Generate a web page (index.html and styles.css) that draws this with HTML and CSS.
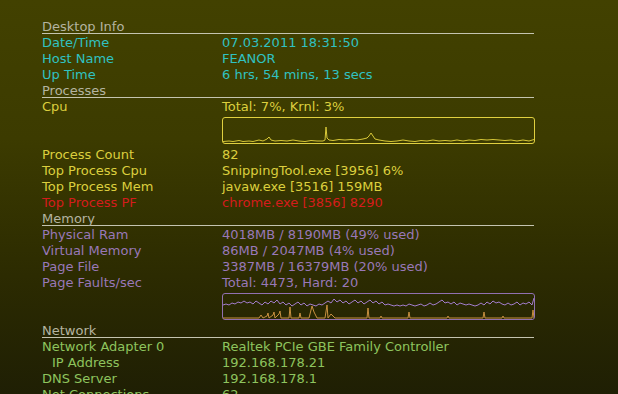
FILE: index.html
```html
<!DOCTYPE html>
<html>
<head>
<meta charset="utf-8">
<link rel="stylesheet" href="styles.css">
</head>
<body>
<div class="panel">
  <div class="head">Desktop Info</div>
  <div class="row cyan"><span class="k">Date/Time</span><span class="v">07.03.2011 18:31:50</span></div>
  <div class="row cyan"><span class="k">Host Name</span><span class="v">FEANOR</span></div>
  <div class="row cyan"><span class="k">Up Time</span><span class="v">6 hrs, 54 mins, 13 secs</span></div>

  <div class="head">Processes</div>
  <div class="row yellow"><span class="k">Cpu</span><span class="v">Total: 7%, Krnl: 3%</span></div>
  <div class="graphrow">
    <div class="graph cpu">
      <svg viewBox="0 0 311 25" preserveAspectRatio="none">
        <polyline fill="none" stroke="#d8c838" stroke-width="1" points="0,23.5 6,23 10,23.5 16,22.5 20,23.5 26,23 30,23.5 36,22 40,23 44,21 46,19 48,22 52,23 58,22.5 64,23 70,22 76,23 82,23.5 88,22.5 94,23 100,23 102,22 103,9 104,20 106,22 110,22.5 116,21.5 122,22 128,21.5 134,22 140,21 144,20 146,18 148,15 150,18 152,21 156,22 162,23 168,23.5 174,23 180,22 186,23 192,23.5 198,22.5 204,23 210,22 216,23 222,22.5 228,23 234,22 240,23 246,22 252,22.5 258,21.5 264,22 270,21.5 276,22 282,22.5 288,22 294,23 300,22 306,23 311,21.5"/>
      </svg>
    </div>
  </div>
  <div class="row yellow"><span class="k">Process Count</span><span class="v">82</span></div>
  <div class="row yellow"><span class="k">Top Process Cpu</span><span class="v">SnippingTool.exe [3956] 6%</span></div>
  <div class="row yellow"><span class="k">Top Process Mem</span><span class="v">javaw.exe [3516] 159MB</span></div>
  <div class="row red"><span class="k">Top Process PF</span><span class="v">chrome.exe [3856] 8290</span></div>

  <div class="head">Memory</div>
  <div class="row purple"><span class="k">Physical Ram</span><span class="v">4018MB / 8190MB (49% used)</span></div>
  <div class="row purple"><span class="k">Virtual Memory</span><span class="v">86MB / 2047MB (4% used)</span></div>
  <div class="row purple"><span class="k">Page File</span><span class="v">3387MB / 16379MB (20% used)</span></div>
  <div class="row purple"><span class="k">Page Faults/sec</span><span class="v">Total: 4473, Hard: 20</span></div>
  <div class="graphrow">
    <div class="graph mem">
      <svg viewBox="0 0 311 25" preserveAspectRatio="none">
        <path fill="none" stroke="#c89040" stroke-width="1" d="M0,24 L36,24 L38,21 L40,24 L44,22 L45,19 L46,24 L50,21 L51,18 L52,24 L56,20 L57,17 L58,24 L66,24 L67,13 L68,24 L76,24 L77,19 L78,24 L86,24 L88,16 L89,12 L91,18 L93,22 L94,24 L102,24 L104,11 L105,24 L108,20 L110,22 L112,24 L144,24 L145,14 L146,24 L157,24 L158,22 L159,24 L185,24 L186,18 L187,24 L224,24 L225,22 L226,24 L260,24 L261,18 L262,24 L279,24 L280,22 L281,24 L309,24 L310,16 L311,24"/>
        <polyline fill="none" stroke="#a27ccc" stroke-width="1" points="0,11 3,10 6,11 9,9 12,10 15,8 18,9 21,7 24,9 27,8 30,10 33,7 36,9 39,11 42,8 45,10 48,7 51,9 54,6 57,10 60,8 63,11 66,9 69,12 72,10 75,8 78,11 81,9 84,12 87,10 90,11 93,12 96,10 99,11 102,9 105,7 108,9 111,5 114,8 117,6 120,9 123,7 126,10 129,8 132,6 135,9 138,7 141,10 144,8 147,6 150,9 153,7 156,10 159,8 162,11 165,10 168,11 171,12 174,11 177,12 180,11 183,12 186,10 189,11 192,12 195,11 198,10 201,12 204,11 207,9 210,11 213,10 216,8 219,6 222,9 225,8 228,10 231,8 234,11 237,9 240,10 243,11 246,10 249,11 252,12 255,11 258,9 261,11 264,8 267,10 270,7 273,9 276,8 279,10 282,11 285,9 288,11 291,10 294,8 297,11 300,9 303,10 306,8 309,11 311,4"/>
      </svg>
    </div>
  </div>

  <div class="head">Network</div>
  <div class="row green"><span class="k">Network Adapter 0</span><span class="v">Realtek PCIe GBE Family Controller</span></div>
  <div class="row green"><span class="k indent">IP Address</span><span class="v">192.168.178.21</span></div>
  <div class="row green"><span class="k">DNS Server</span><span class="v">192.168.178.1</span></div>
  <div class="row green"><span class="k">Net Connections</span><span class="v">62</span></div>
</div>
</body>
</html>
```

FILE: styles.css
```css
html, body {
  margin: 0;
  padding: 0;
  height: 394px;
  overflow: hidden;
}
body {
  background: linear-gradient(to bottom, #424100 0%, #3c3b00 35%, #2c2b01 70%, #1f1f04 100%);
  font-family: "DejaVu Sans", Verdana, sans-serif;
  font-size: 13px;
}
.panel {
  width: 492px;
  padding: 19px 0 0 42px;
  display: flex;
  flex-direction: column;
}
.head {
  line-height: 12px;
  padding-top: 2px;
  border-bottom: 1px solid #c4c4b0;
  margin-bottom: 1px;
  color: #b4b4a0;
  white-space: nowrap;
}
.row {
  display: grid;
  grid-template-columns: 180px 1fr;
  line-height: 16px;
  height: 16px;
  white-space: nowrap;
}
.indent { padding-left: 10px; }
.cyan { color: #30c2c2; }
.yellow { color: #dccf3e; }
.red { color: #d41c1c; }
.purple { color: #9878b8; }
.green { color: #8ec45e; }
.graphrow {
  height: 32px;
  padding: 2px 0 0 180px;
  box-sizing: border-box;
}
.graph {
  width: 311px;
  height: 25px;
  border: 1px solid;
  border-radius: 3px;
}
.graph svg {
  display: block;
  width: 311px;
  height: 25px;
}
.cpu { border-color: #e0d040; }
.mem { border-color: #9070b0; }
```
